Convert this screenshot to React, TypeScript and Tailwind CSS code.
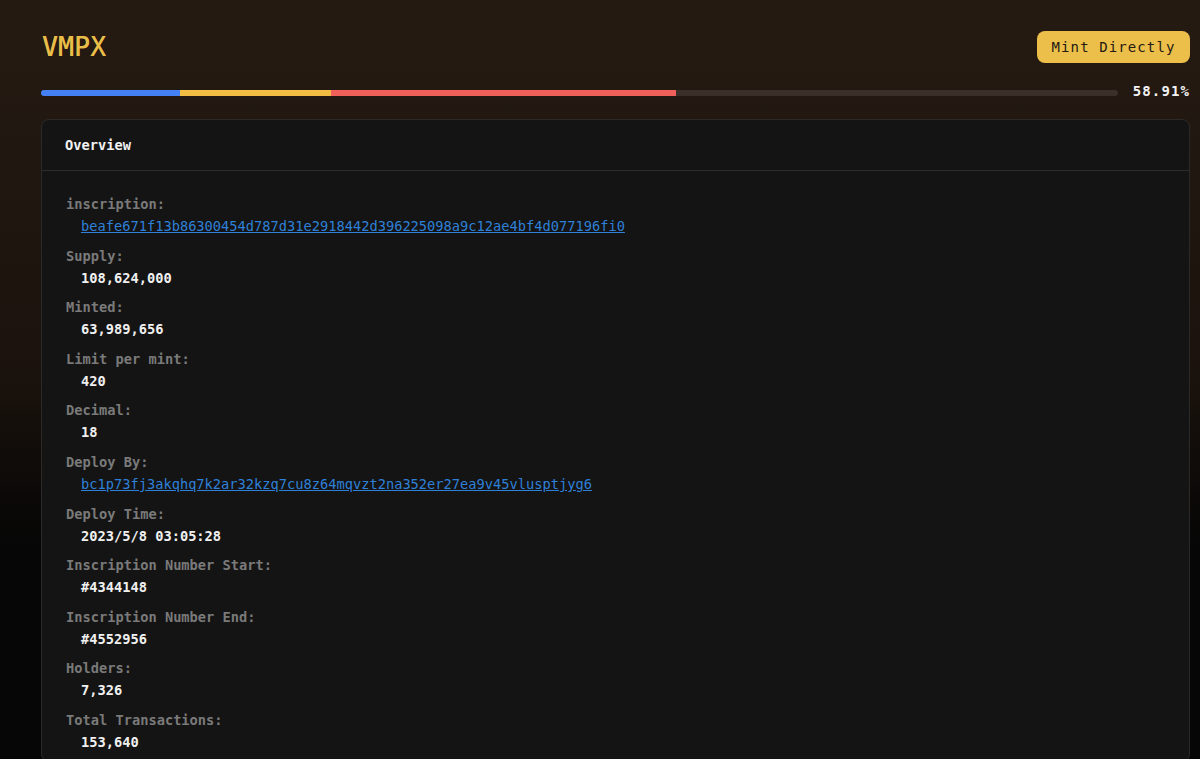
const font = "font-['DejaVu_Sans_Mono','Liberation_Mono',monospace]";

type Row = { label: string; value: string; href?: boolean };

const rows: Row[] = [
  { label: "inscription", value: "beafe671f13b86300454d787d31e2918442d396225098a9c12ae4bf4d077196fi0", href: true },
  { label: "Supply", value: "108,624,000" },
  { label: "Minted", value: "63,989,656" },
  { label: "Limit per mint", value: "420" },
  { label: "Decimal", value: "18" },
  { label: "Deploy By", value: "bc1p73fj3akqhq7k2ar32kzq7cu8z64mqvzt2na352er27ea9v45vlusptjyg6", href: true },
  { label: "Deploy Time", value: "2023/5/8 03:05:28" },
  { label: "Inscription Number Start", value: "#4344148" },
  { label: "Inscription Number End", value: "#4552956" },
  { label: "Holders", value: "7,326" },
  { label: "Total Transactions", value: "153,640" },
];

export default function App() {
  return (
    <div className={`${font} h-[759px] overflow-hidden bg-gradient-to-b from-[#241a12] from-[5%] via-[#1a120c] via-[50%] to-[#060606] to-[72%] pl-[41px] pr-[10px] pt-[31px] text-[13.7px]`}>
      {/* header */}
      <div className="flex items-center justify-between">
        <h1 className="pl-px text-[26px] leading-8 tracking-[0.4px] text-[#e8bd48] [text-shadow:0.4px_0_0_#e8bd48]">VMPX</h1>
        <button className="h-8 w-[153px] rounded-lg bg-[#ecbf4b] text-center text-[14px] tracking-[1.1px] text-[#241a12]">
          Mint Directly
        </button>
      </div>

      {/* progress */}
      <div className="mt-[18px] flex h-[20px] items-center justify-between">
        <div className="mt-1 flex h-1.5 w-[1077px] overflow-hidden rounded-full bg-[#3a3029]">
          <div className="w-[139px] bg-[#4381f5]" />
          <div className="w-[151px] bg-[#f2bd42]" />
          <div className="w-[345px] bg-[#f0605a]" />
        </div>
        <span className="text-[14px] font-bold leading-5 tracking-[1.1px] text-[#f2f2f2]">58.91%</span>
      </div>

      {/* overview card */}
      <div className="mt-[18px] rounded-lg border border-[#2c2a28] bg-[#141414]">
        <div className="flex h-[51px] items-center border-b border-[#2c2c2c] px-[23px] font-bold text-[#f2f2f2]">
          Overview
        </div>
        <div className="px-6 pt-[22px]">
          {rows.map((r) => (
            <div key={r.label} className="mb-[7.6px] leading-[22px]">
              <div className="font-bold text-[#7a7a7a]">{r.label}:</div>
              <div className="pl-[15px]">
                {r.href ? (
                  <a href="#" className="text-[#2f80d8] underline">
                    {r.value}
                  </a>
                ) : (
                  <span className="font-bold text-[#f0f0f0]">{r.value}</span>
                )}
              </div>
            </div>
          ))}
        </div>
      </div>
    </div>
  );
}
